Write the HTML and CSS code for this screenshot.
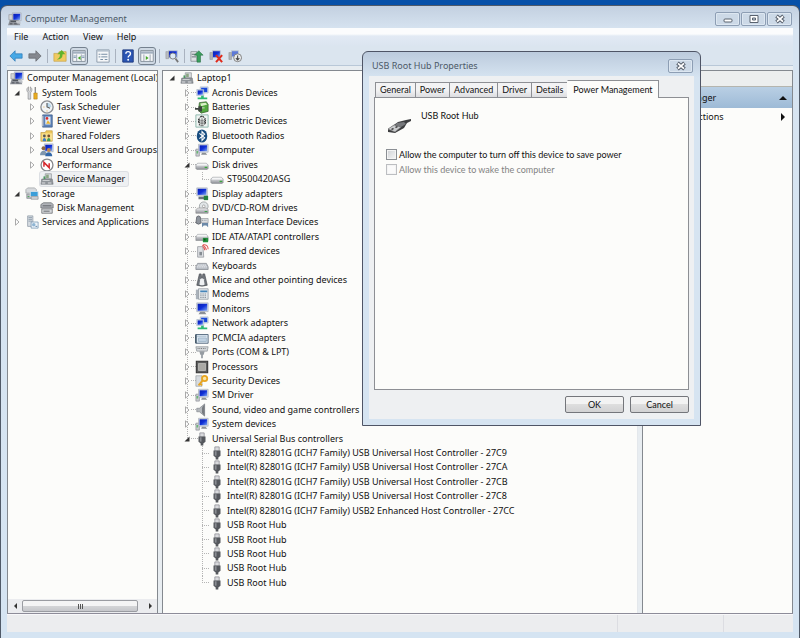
FILE: index.html
```html
<!DOCTYPE html>
<html lang="en">
<head>
    <meta charset="UTF-8">
    <meta name="viewport" content="width=device-width, initial-scale=1.0">
    <title>Computer Management</title>
    <link rel="stylesheet" href="styles.css">
</head>
<body>
    <svg class="sprite" aria-hidden="true">
        <defs>
            <linearGradient id="screen" x1="0" y1="0" x2="1" y2="1"><stop offset="0" stop-color="#0a1fae"/><stop offset=".5" stop-color="#1030d8"/><stop offset="1" stop-color="#7fa8f0"/></linearGradient>
            <linearGradient id="metal" x1="0" y1="0" x2="0" y2="1"><stop offset="0" stop-color="#f2f2f4"/><stop offset="1" stop-color="#8f9298"/></linearGradient>
        </defs>
        <symbol id="open" viewBox="0 0 8 8"><path d="M6.500 1.500v5h-5z" fill="#333"/></symbol>
        <symbol id="closed" viewBox="0 0 8 8"><path d="M2.500 .8v6.400L6 4z" fill="#fff" stroke="#a0a0a0" stroke-width=".9"/></symbol>
        <symbol id="pc" viewBox="0 0 16 16"><path d="M1 7h4v8H1z" fill="#c9ccd0" stroke="#83878d" stroke-width=".7"/><path d="M2 9h1v3H2z" fill="#2fae3a"/><path d="M4 1.500h11v9H4z" fill="#e2e6ec" stroke="#9aa3b0" stroke-width=".7"/><path d="M5.200 2.600h8.700v6.800H5.200z" fill="url(#screen)"/><path d="M8 11h4l2 2.500H7z" fill="#8b9096"/></symbol>
        <symbol id="mgmt" viewBox="0 0 16 16"><path d="M5 1h10v9H5z" fill="#e2e6ec" stroke="#9aa3b0" stroke-width=".7"/><path d="M6 2h8v7H6z" fill="url(#screen)"/><path d="M1 3h4v6H1z" fill="#d3d5d8" stroke="#888" stroke-width=".6"/><path d="M2 9h10l2 6H0z" fill="#8d9198"/><path d="M3 10h7v1H3zM2 13h3v1H2zM7 13h4v1H7z" fill="#3d4148"/><path d="M9 10h4l2 3h-5z" fill="#c2c6cb"/></symbol>
        <symbol id="tools" viewBox="0 0 16 16"><path d="M4 1v4l1 1 1-1V1c3 2 2 5 .5 6.500V15h-3V7.500C2 6 1 3 4 1z" fill="#d3d5d9" stroke="#777" stroke-width=".6"/><path d="M11 1h1.500v7H11z" fill="#888"/><path d="M10 8h4v7h-4z" fill="#e8ac20" stroke="#a57310" stroke-width=".5"/></symbol>
        <symbol id="clock" viewBox="0 0 16 16"><circle cx="8" cy="8" r="7" fill="#f2f5f7" stroke="#8a8d92" stroke-width="1.500"/><path d="M8 8V3a5 5 0 0 1 5 5z" fill="#b9d8ec"/><path d="M8 3.500V8l3.500 1.500" fill="none" stroke="#555" stroke-width="1.200"/><path d="M4 8h1M8 12v1" stroke="#e39a20"/></symbol>
        <symbol id="book" viewBox="0 0 16 16"><path d="M3 1h11v14H3z" fill="#5d82b8" stroke="#385986" stroke-width=".8"/><path d="M2 2h2v12H2z" fill="#b9bfc6"/><path d="M6 3h6v9H6z" fill="#dfe9f5"/><circle cx="8" cy="5" r="1.500" fill="#d92b2b"/><path d="M9 7l3 4H7z" fill="#e8b22c"/></symbol>
        <symbol id="shared" viewBox="0 0 16 16"><path d="M1 4h5l1-2h7v12H1z" fill="#efc95c" stroke="#b8923a" stroke-width=".7"/><path d="M2 5h12v8H2z" fill="#f8df8d"/><circle cx="5" cy="8" r="1.600" fill="#555"/><path d="M3 14c0-5 4-5 4 0z" fill="#3a7cc4"/><circle cx="10" cy="8" r="1.600" fill="#7a4f2a"/><path d="M8 14c0-5 4-5 4 0z" fill="#3e9a53"/></symbol>
        <symbol id="users" viewBox="0 0 16 16"><path d="M5 1h10v9H5z" fill="#e2e6ec" stroke="#9aa3b0" stroke-width=".7"/><path d="M6 2h8v7H6z" fill="url(#screen)"/><circle cx="4" cy="6" r="2.200" fill="#8c6540"/><path d="M0 14c0-7 8-7 8 0z" fill="#7f96ad"/><circle cx="10" cy="8" r="2.200" fill="#c08850"/><path d="M6 15c0-6 8-6 8 0z" fill="#3267a8"/></symbol>
        <symbol id="perf" viewBox="0 0 16 16"><circle cx="8" cy="8" r="6.800" fill="#fff" stroke="#85888c" stroke-width="1.500"/><path d="M4.500 10V5l6 6V6" fill="none" stroke="#d5262b" stroke-width="1.700"/></symbol>
        <symbol id="device" viewBox="0 0 16 16"><path d="M6 2h7v6H6z" fill="#dadde0" stroke="#81858a" stroke-width=".7"/><path d="M7 3h3v4H7z" fill="#8ba583"/><path d="M2 8h12l1 6H1z" fill="#90959a" stroke="#6d7177" stroke-width=".6"/><path d="M3 9h8v1H3zM2 12h4v1H2zM9 12h4v1H9z" fill="#dfe2e4"/><path d="M4 5h2v3H4z" fill="#4c9960"/></symbol>
        <symbol id="storage" viewBox="0 0 16 16"><path d="M1 3l2-2h8l2 2v4H1z" fill="#d7dadd" stroke="#8c9096" stroke-width=".7"/><path d="M2 8h10v5H2z" fill="#b9bdc2" stroke="#7d8187" stroke-width=".7"/><path d="M6 5h9v6H6z" fill="#3b9ed8" stroke="#e5e8eb"/><path d="M7 11h8v3H7z" fill="#d2d5d8" stroke="#777" stroke-width=".6"/><path d="M3 11h2" stroke="#35a445"/></symbol>
        <symbol id="disk" viewBox="0 0 16 16"><path d="M1 4l3-2h9l2 2v4H1z" fill="#b0b3b8" stroke="#61656a" stroke-width=".8"/><path d="M2 9h12v5H2z" fill="#d5d7da" stroke="#61656a" stroke-width=".8"/><path d="M3 5h10v1H3zM4 11h7v1H4z" fill="#45484c"/></symbol>
        <symbol id="services" viewBox="0 0 16 16"><path d="M3 1h6v12H3z" fill="#d6dce2" stroke="#8894a0" stroke-width=".8"/><path d="M4 3h4M4 5h4M4 7h4" stroke="#8a99a8"/><path d="M7 8h8v7H7z" fill="#edf3f8" stroke="#6d8fae" stroke-width=".8"/><circle cx="10" cy="11" r="2" fill="#8fb5d3"/><path d="M12 13h2" stroke="#527da0"/></symbol>
        <symbol id="net" viewBox="0 0 16 16"><path d="M6 1h9v7H6z" fill="#d9e3f3" stroke="#98a5b8" stroke-width=".6"/><path d="M7 2h7v5H7z" fill="#1a49d8"/><path d="M2 4h8v7H2z" fill="#dfe8f6" stroke="#94a2b6" stroke-width=".6"/><path d="M3 5h6v5H3z" fill="url(#screen)"/><path d="M7 11h3v2h4v2H3v-2h4z" fill="#2dba74"/></symbol>
        <symbol id="battery" viewBox="0 0 16 16"><path d="M5 3l8-1 2 3v8l-8 2-3-3z" fill="#52a93e" stroke="#395c32" stroke-width=".8"/><path d="M6 4l6-1 2 2-7 2z" fill="#d9efc8"/><path d="M0 9h4V7h4v6H4v-2H0z" fill="#3e4340"/><path d="M8 9h3" stroke="#ddd"/></symbol>
        <symbol id="finger" viewBox="0 0 16 16"><path d="M1 1h14v14H1z" fill="#eef3f1" stroke="#86b4a8"/><path d="M5 13V6c0-4 6-4 6 0v6M7 14V7c0-2 2-2 2 0v7M4 10V5m8 6V5M6 3q2-1 4 0" fill="none" stroke="#222" stroke-width="1" stroke-dasharray="2 .6"/></symbol>
        <symbol id="bt" viewBox="0 0 16 16"><ellipse cx="8" cy="8" rx="6" ry="7.500" fill="#184d80"/><path d="M5 5l6 5-3 3V3l3 3-6 5" fill="none" stroke="#fff" stroke-width="1.200"/></symbol>
        <symbol id="drive" viewBox="0 0 16 16"><path d="M1 8l2-2h10l2 2v4l-1 1H2l-1-1z" fill="url(#metal)" stroke="#8a8d91" stroke-width=".7"/><path d="M3 6.500h10l1.500 2h-13z" fill="#f4f5f6"/><path d="M11 10h3v1.500h-3z" fill="#3aa83c"/></symbol>
        <symbol id="display" viewBox="0 0 16 16"><path d="M2 1h12v9H2z" fill="#e2e6ec" stroke="#9aa3b0" stroke-width=".7"/><path d="M3 2h10v7H3z" fill="url(#screen)"/><path d="M4 11h9v3H4z" fill="#6b747d"/><path d="M10 10h5v5h-5z" fill="#23803e"/></symbol>
        <symbol id="dvd" viewBox="0 0 16 16"><circle cx="10" cy="6" r="5" fill="#e1e6e8" stroke="#8d9295" stroke-width=".8"/><circle cx="10" cy="6" r="1.500" fill="#fff" stroke="#777" stroke-width=".6"/><path d="M1 10l2-2h10l2 2v4H1z" fill="url(#metal)" stroke="#888" stroke-width=".7"/><path d="M11 12h3" stroke="#2b9d3b"/></symbol>
        <symbol id="hid" viewBox="0 0 16 16"><path d="M2 2q2-2 4 0l1 7q-3 3-6 0z" fill="#8e949c" stroke="#50555b" stroke-width=".8"/><path d="M7 4h8v5H7z" fill="#dcdfe2" stroke="#8a8e94" stroke-width=".7"/><path d="M8 9h7v5l-2-2h-3l-2 2z" fill="#6b89a8"/><path d="M8 6h6" stroke="#7e848c" stroke-dasharray="1 1"/></symbol>
        <symbol id="ide" viewBox="0 0 16 16"><path d="M1 8l2-3h10l2 3v4H1z" fill="url(#metal)" stroke="#8a8d91" stroke-width=".7"/><path d="M3 5.500h10l1 2H2z" fill="#f4f5f6"/><path d="M9 9h6v5H9z" fill="#21903c"/><path d="M10 10h2v2h-2z" fill="#114d22"/></symbol>
        <symbol id="ir" viewBox="0 0 16 16"><path d="M3 3h6l1 12H3z" fill="#dcdfe2" stroke="#8a8e94" stroke-width=".8"/><path d="M5 9h3v4H5z" fill="#868c92"/><path d="M8 2q4 0 5 5M9 4q2 0 2 3M9 1q6-1 6 5" fill="none" stroke="#e05656" stroke-width="1.200"/></symbol>
        <symbol id="kbd" viewBox="0 0 16 16"><path d="M3 5h10l2 4v3H1V9z" fill="#b9bec5" stroke="#7e838a" stroke-width=".8"/><path d="M3 7h10M2 9h12" stroke="#f3f5f7" stroke-dasharray="1.500 .5"/></symbol>
        <symbol id="mouse" viewBox="0 0 16 16"><path d="M5 1h2l1 6 1-6h2l3 13q-6 2-12 0z" fill="#70757b" stroke="#43474c" stroke-width=".7"/><path d="M6 7q2-2 4 0l1 6q-3 2-6 0z" fill="#eef0f2"/></symbol>
        <symbol id="modem" viewBox="0 0 16 16"><path d="M1 3h3v11H1z" fill="#aab2ba"/><path d="M4 2h11v12H4z" fill="#e4e8eb" stroke="#88919a" stroke-width=".8"/><path d="M6 4h8v2H6z" fill="#4585b8"/><path d="M6 8h7M6 10h7M6 12h7" stroke="#7b8893" stroke-dasharray="1.500 1"/></symbol>
        <symbol id="monitor" viewBox="0 0 16 16"><path d="M2 1h13v10H2z" fill="#e2e6ec" stroke="#9aa3b0" stroke-width=".7"/><path d="M3 2h11v8H3z" fill="url(#screen)"/><path d="M6 11h5l2 3H4z" fill="#8b9096"/></symbol>
        <symbol id="card" viewBox="0 0 16 16"><path d="M1 4h14v10H1z" fill="#dbe7f1" stroke="#4e6478"/><path d="M2 6h11M4 8h9v4H4z" fill="#c0d2e2" stroke="#91a9bd" stroke-width=".7"/><path d="M1 4v10" stroke="#34495a" stroke-width="1.500"/></symbol>
        <symbol id="port" viewBox="0 0 16 16"><path d="M1 2h14l-1 5H2z" fill="#d3d7da" stroke="#8a9095" stroke-width=".8"/><path d="M3 4h10" stroke="#666" stroke-dasharray="1 1"/><path d="M5 7h6l-1 4H9v4H7v-4H6z" fill="#969ca2"/></symbol>
        <symbol id="cpu" viewBox="0 0 16 16"><path d="M1.500 1.500h13v13h-13z" fill="#5d5e5e" stroke="#333" stroke-width="1.200"/><path d="M4 4h8v8H4z" fill="#aaa9a5" stroke="#d1d1cd" stroke-width=".7"/></symbol>
        <symbol id="key" viewBox="0 0 16 16"><path d="M1 2h7v12H1z" fill="#d7dbdf" stroke="#8e959b" stroke-width=".7"/><circle cx="11" cy="5" r="3" fill="#fbe6a6" stroke="#e8a520" stroke-width="2"/><path d="M9 7l-5 6m2-2l2 2" stroke="#e8a520" stroke-width="2"/></symbol>
        <symbol id="sound" viewBox="0 0 16 16"><path d="M2 6h3l6-5v14l-6-5H2z" fill="#b4b8bc" stroke="#7a7e83" stroke-width=".7"/><path d="M8 5l3-4v14l-3-4z" fill="#777b80"/></symbol>
        <symbol id="usb" viewBox="0 0 16 16"><path d="M5.500 1h5v5h-5z" fill="#d9dadd" stroke="#85878c" stroke-width=".8"/><path d="M4 5h8v6l-2.500 2v2.500h-3V13L4 11z" fill="#55585d"/><path d="M5.500 6h2v5h-2z" fill="#8a8d92"/></symbol>
        <symbol id="back" viewBox="0 0 16 16"><path d="M1 8l6-6v3.500h8v5H7V14z" fill="#46a8e6" stroke="#2c78b5" stroke-width=".8"/></symbol>
        <symbol id="forward" viewBox="0 0 16 16"><path d="M15 8L9 2v3.500H1v5h8V14z" fill="#85888f" stroke="#63666c" stroke-width=".8"/></symbol>
        <symbol id="up" viewBox="0 0 16 16"><path d="M1 5h5l1-2h8v11H1z" fill="#f0ca62" stroke="#c49b3b" stroke-width=".7"/><path d="M4 12q4-1 4-6H5l5-5 4 5h-3q0 6-7 6z" fill="#60b32c"/></symbol>
        <symbol id="console" viewBox="0 0 18 16"><path d="M1 1h16v14H1z" fill="#f4f6f8" stroke="#78838f"/><path d="M1 2h16v3H1z" fill="#a3b0bf"/><path d="M6 6v9M12 6v9" stroke="#8894a1"/><path d="M2 8h3M2 10h3M13 8h3M13 10h3" stroke="#6284a3"/><path d="M11 8v5L7.500 10.500z" fill="#43a725"/></symbol>
        <symbol id="action" viewBox="0 0 18 16"><path d="M1 1h16v14H1z" fill="#f4f6f8" stroke="#78838f"/><path d="M1 2h16v3H1z" fill="#a3b0bf"/><path d="M5 6v9M13 6v9" stroke="#8894a1"/><path d="M7.500 8v5l3.500-2.500z" fill="#43a725"/></symbol>
        <symbol id="props" viewBox="0 0 16 16"><path d="M1 1h14v14H1z" fill="#f5f7f9" stroke="#8796a5"/><path d="M1 1h14v2H1z" fill="#b4c1cd"/><path d="M3 6h2M3 9h2M6 6h7M6 9h7M5 12h3M10 12h3" stroke="#668099"/></symbol>
        <symbol id="help" viewBox="0 0 16 16"><path d="M2 1h12v14H2z" fill="#2b55b3" stroke="#1b377c"/><path d="M5.500 5.500q0-2.500 2.700-2.500 2.600 0 2.600 2.300 0 1.500-1.500 2.400-1.100.7-1.100 2" fill="none" stroke="#fff" stroke-width="1.600"/><circle cx="8.200" cy="12.200" r="1.100" fill="#fff"/></symbol>
        <symbol id="scan" viewBox="0 0 16 16"><path d="M4 2h10v8H4z" fill="url(#screen)" stroke="#c4cbd4"/><path d="M1 3h3v8H1z" fill="#b9bdc2" stroke="#888" stroke-width=".5"/><circle cx="9" cy="8" r="3.500" fill="#dceaf5" stroke="#777"/><path d="M12 11l3 4" stroke="#777" stroke-width="2"/></symbol>
        <symbol id="update" viewBox="0 0 16 16"><path d="M1 3h7v11H1z" fill="#dde1e4" stroke="#7d8489" stroke-width=".8"/><path d="M2 6h5M2 9h5" stroke="#59616a"/><path d="M8 15V7H5l5-5 5 5h-3v8z" fill="#3a9e5d" stroke="#26693e" stroke-width=".6"/></symbol>
        <symbol id="remove" viewBox="0 0 16 16"><path d="M4 2h9v8H4z" fill="url(#screen)" stroke="#c4cbd4"/><path d="M1 4h3v8H1z" fill="#aeb2b7" stroke="#888" stroke-width=".5"/><path d="M8 7l7 8M15 7l-7 8" stroke="#e02a1b" stroke-width="2.300"/></symbol>
        <symbol id="disable" viewBox="0 0 16 16"><path d="M4 2h8v7H4z" fill="#5d79d8" stroke="#c4cbd4"/><path d="M1 4h3v8H1z" fill="#aeb2b7" stroke="#888" stroke-width=".5"/><circle cx="11" cy="10" r="4.500" fill="#e9ebed" stroke="#777"/><path d="M11 7.500v5M9 10.500l2 2 2-2" fill="none" stroke="#444" stroke-width="1.200"/></symbol>
        <symbol id="close" viewBox="0 0 12 12"><path d="M2.500 3l7 6M9.500 3l-7 6" stroke="#59626e" stroke-width="3.800"/><path d="M3 3.400l6 5.200M9 3.400L3 8.600" stroke="#fff" stroke-width="1.800"/></symbol>
        <symbol id="max" viewBox="0 0 12 12"><path d="M2 2.500h8v7H2z" fill="#fff" stroke="#59626e"/><path d="M4.500 5h3v2h-3z" fill="#ccd6e2" stroke="#59626e"/></symbol>
        <symbol id="min" viewBox="0 0 12 12"><rect x="2" y="6" width="8" height="3" rx="1" fill="#fff" stroke="#59626e"/></symbol>
        <symbol id="plug" viewBox="0 0 26 16"><path d="M25 1l-5 1-8 2-10 7v3l7 1 9-5 3-5 4-2z" fill="#3d3e40"/><path d="M2 11l6-4 7 2-6 5z" fill="#c9cbcd" stroke="#777" stroke-width=".6"/><path d="M5 11l2-1 1 1-2 1zM9 9l2-1 1 1-2 1z" fill="#333"/><path d="M11 5l7-1 2 2-5 3-6-2z" fill="#77797c"/></symbol>
    </svg>

    <main class="window">
        <header class="titlebar">
            <svg class="icon"><use href="#mgmt"/></svg>
            <h1>Computer Management</h1>
            <div class="caption-buttons">
                <button aria-label="Minimize"><svg><use href="#min"/></svg></button>
                <button aria-label="Maximize"><svg><use href="#max"/></svg></button>
                <button aria-label="Close"><svg><use href="#close"/></svg></button>
            </div>
        </header>
        <nav class="menubar">
            <button>File</button>
            <button>Action</button>
            <button>View</button>
            <button>Help</button>
        </nav>
        <div class="toolbar">
            <button aria-label="Back"><svg class="icon"><use href="#back"/></svg></button>
            <button aria-label="Forward"><svg class="icon"><use href="#forward"/></svg></button>
            <span class="sep"></span>
            <button aria-label="Up"><svg class="icon"><use href="#up"/></svg></button>
            <button class="pressed" aria-label="Console tree"><svg class="icon"><use href="#console"/></svg></button>
            <span class="gap"></span>
            <button aria-label="Properties"><svg class="icon"><use href="#props"/></svg></button>
            <span class="sep"></span>
            <button aria-label="Help topics"><svg class="icon"><use href="#help"/></svg></button>
            <button class="pressed" aria-label="Action pane"><svg class="icon"><use href="#action"/></svg></button>
            <span class="sep"></span>
            <button aria-label="Scan"><svg class="icon"><use href="#scan"/></svg></button>
            <span class="sep"></span>
            <button aria-label="Update driver"><svg class="icon"><use href="#update"/></svg></button>
            <button aria-label="Uninstall"><svg class="icon"><use href="#remove"/></svg></button>
            <button aria-label="Disable"><svg class="icon"><use href="#disable"/></svg></button>
        </div>

        <div class="panes">
            <section class="pane console">
                <ul class="tree">
                    <li class="root"><svg class="icon"><use href="#mgmt"/></svg><span>Computer Management (Local)</span></li>
                    <li class="l0"><svg class="toggle"><use href="#open"/></svg><svg class="icon"><use href="#tools"/></svg><span>System Tools</span></li>
                    <li class="l1"><svg class="toggle"><use href="#closed"/></svg><svg class="icon"><use href="#clock"/></svg><span>Task Scheduler</span></li>
                    <li class="l1"><svg class="toggle"><use href="#closed"/></svg><svg class="icon"><use href="#book"/></svg><span>Event Viewer</span></li>
                    <li class="l1"><svg class="toggle"><use href="#closed"/></svg><svg class="icon"><use href="#shared"/></svg><span>Shared Folders</span></li>
                    <li class="l1"><svg class="toggle"><use href="#closed"/></svg><svg class="icon"><use href="#users"/></svg><span>Local Users and Groups</span></li>
                    <li class="l1"><svg class="toggle"><use href="#closed"/></svg><svg class="icon"><use href="#perf"/></svg><span>Performance</span></li>
                    <li class="l1"><svg class="toggle"></svg><div class="selected"><svg class="icon"><use href="#device"/></svg><span>Device Manager</span></div></li>
                    <li class="l0"><svg class="toggle"><use href="#open"/></svg><svg class="icon"><use href="#storage"/></svg><span>Storage</span></li>
                    <li class="l1"><svg class="toggle"></svg><svg class="icon"><use href="#disk"/></svg><span>Disk Management</span></li>
                    <li class="l0"><svg class="toggle"><use href="#closed"/></svg><svg class="icon"><use href="#services"/></svg><span>Services and Applications</span></li>
                </ul>
                <div class="scrollbar">
                    <button class="arrow left" aria-label="Scroll left"></button>
                    <div class="thumb"><i></i><i></i><i></i></div>
                    <button class="arrow right" aria-label="Scroll right"></button>
                </div>
            </section>

            <section class="pane devices">
                <ul class="tree">
                    <li class="l0"><svg class="toggle"><use href="#open"/></svg><svg class="icon"><use href="#device"/></svg><span>Laptop1</span></li>
                    <li class="l1"><svg class="toggle"><use href="#closed"/></svg><svg class="icon"><use href="#net"/></svg><span>Acronis Devices</span></li>
                    <li class="l1"><svg class="toggle"><use href="#closed"/></svg><svg class="icon"><use href="#battery"/></svg><span>Batteries</span></li>
                    <li class="l1"><svg class="toggle"><use href="#closed"/></svg><svg class="icon"><use href="#finger"/></svg><span>Biometric Devices</span></li>
                    <li class="l1"><svg class="toggle"><use href="#closed"/></svg><svg class="icon"><use href="#bt"/></svg><span>Bluetooth Radios</span></li>
                    <li class="l1"><svg class="toggle"><use href="#closed"/></svg><svg class="icon"><use href="#pc"/></svg><span>Computer</span></li>
                    <li class="l1"><svg class="toggle"><use href="#open"/></svg><svg class="icon"><use href="#drive"/></svg><span>Disk drives</span></li>
                    <li class="l2 inner last"><svg class="toggle"></svg><svg class="icon"><use href="#drive"/></svg><span>ST9500420ASG</span></li>
                    <li class="l1"><svg class="toggle"><use href="#closed"/></svg><svg class="icon"><use href="#display"/></svg><span>Display adapters</span></li>
                    <li class="l1"><svg class="toggle"><use href="#closed"/></svg><svg class="icon"><use href="#dvd"/></svg><span>DVD/CD-ROM drives</span></li>
                    <li class="l1"><svg class="toggle"><use href="#closed"/></svg><svg class="icon"><use href="#hid"/></svg><span>Human Interface Devices</span></li>
                    <li class="l1"><svg class="toggle"><use href="#closed"/></svg><svg class="icon"><use href="#ide"/></svg><span>IDE ATA/ATAPI controllers</span></li>
                    <li class="l1"><svg class="toggle"><use href="#closed"/></svg><svg class="icon"><use href="#ir"/></svg><span>Infrared devices</span></li>
                    <li class="l1"><svg class="toggle"><use href="#closed"/></svg><svg class="icon"><use href="#kbd"/></svg><span>Keyboards</span></li>
                    <li class="l1"><svg class="toggle"><use href="#closed"/></svg><svg class="icon"><use href="#mouse"/></svg><span>Mice and other pointing devices</span></li>
                    <li class="l1"><svg class="toggle"><use href="#closed"/></svg><svg class="icon"><use href="#modem"/></svg><span>Modems</span></li>
                    <li class="l1"><svg class="toggle"><use href="#closed"/></svg><svg class="icon"><use href="#monitor"/></svg><span>Monitors</span></li>
                    <li class="l1"><svg class="toggle"><use href="#closed"/></svg><svg class="icon"><use href="#net"/></svg><span>Network adapters</span></li>
                    <li class="l1"><svg class="toggle"><use href="#closed"/></svg><svg class="icon"><use href="#card"/></svg><span>PCMCIA adapters</span></li>
                    <li class="l1"><svg class="toggle"><use href="#closed"/></svg><svg class="icon"><use href="#port"/></svg><span>Ports (COM &amp; LPT)</span></li>
                    <li class="l1"><svg class="toggle"><use href="#closed"/></svg><svg class="icon"><use href="#cpu"/></svg><span>Processors</span></li>
                    <li class="l1"><svg class="toggle"><use href="#closed"/></svg><svg class="icon"><use href="#key"/></svg><span>Security Devices</span></li>
                    <li class="l1"><svg class="toggle"><use href="#closed"/></svg><svg class="icon"><use href="#pc"/></svg><span>SM Driver</span></li>
                    <li class="l1"><svg class="toggle"><use href="#closed"/></svg><svg class="icon"><use href="#sound"/></svg><span>Sound, video and game controllers</span></li>
                    <li class="l1"><svg class="toggle"><use href="#closed"/></svg><svg class="icon"><use href="#pc"/></svg><span>System devices</span></li>
                    <li class="l1 last"><svg class="toggle"><use href="#open"/></svg><svg class="icon"><use href="#usb"/></svg><span>Universal Serial Bus controllers</span></li>
                    <li class="l2"><svg class="toggle"></svg><svg class="icon"><use href="#usb"/></svg><span>Intel(R) 82801G (ICH7 Family) USB Universal Host Controller - 27C9</span></li>
                    <li class="l2"><svg class="toggle"></svg><svg class="icon"><use href="#usb"/></svg><span>Intel(R) 82801G (ICH7 Family) USB Universal Host Controller - 27CA</span></li>
                    <li class="l2"><svg class="toggle"></svg><svg class="icon"><use href="#usb"/></svg><span>Intel(R) 82801G (ICH7 Family) USB Universal Host Controller - 27CB</span></li>
                    <li class="l2"><svg class="toggle"></svg><svg class="icon"><use href="#usb"/></svg><span>Intel(R) 82801G (ICH7 Family) USB Universal Host Controller - 27C8</span></li>
                    <li class="l2"><svg class="toggle"></svg><svg class="icon"><use href="#usb"/></svg><span>Intel(R) 82801G (ICH7 Family) USB2 Enhanced Host Controller - 27CC</span></li>
                    <li class="l2"><svg class="toggle"></svg><svg class="icon"><use href="#usb"/></svg><span>USB Root Hub</span></li>
                    <li class="l2"><svg class="toggle"></svg><svg class="icon"><use href="#usb"/></svg><span>USB Root Hub</span></li>
                    <li class="l2"><svg class="toggle"></svg><svg class="icon"><use href="#usb"/></svg><span>USB Root Hub</span></li>
                    <li class="l2"><svg class="toggle"></svg><svg class="icon"><use href="#usb"/></svg><span>USB Root Hub</span></li>
                    <li class="l2 last"><svg class="toggle"></svg><svg class="icon"><use href="#usb"/></svg><span>USB Root Hub</span></li>
                </ul>
            </section>

            <section class="pane actions">
                <div class="actions-title"></div>
                <div class="actions-group">Device Manager<span class="tri-up"></span></div>
                <div class="actions-item">More Actions<span class="tri-right"></span></div>
            </section>
        </div>
        <footer class="statusbar"><span></span><span></span></footer>
    </main>

    <section class="dialog" role="dialog" aria-labelledby="dialog-title">
        <header class="dialog-title">
            <h2 id="dialog-title">USB Root Hub Properties</h2>
            <button aria-label="Close"><svg><use href="#close"/></svg></button>
        </header>
        <div class="dialog-body">
            <div class="tabs">
                <button>General</button>
                <button>Power</button>
                <button>Advanced</button>
                <button>Driver</button>
                <button>Details</button>
                <button class="active">Power Management</button>
            </div>
            <div class="sheet">
                <div class="device-name">
                    <svg><use href="#plug"/></svg>
                    <span>USB Root Hub</span>
                </div>
                <label><input type="checkbox"> Allow the computer to turn off this device to save power</label>
                <label class="disabled"><input type="checkbox" disabled> Allow this device to wake the computer</label>
            </div>
            <div class="dialog-buttons">
                <button>OK</button>
                <button>Cancel</button>
            </div>
        </div>
    </section>
</body>
</html>
```
FILE: styles.css
```css
* {
    box-sizing: border-box;
}

body {
    margin: 0;
    padding-top: 5px;
    height: 100vh;
    overflow: hidden;
    background: #0650a8;
    font-family: "Noto Sans", "Open Sans", sans-serif;
    font-size: 9px;
    line-height: 14px;
    color: #111;
}

button {
    font: inherit;
    color: inherit;
    padding: 0;
    border: none;
    background: none;
}

h1, h2 {
    margin: 0;
    font-size: 9px;
    font-weight: normal;
    color: #4c5967;
}

.sprite {
    position: absolute;
    width: 0;
    height: 0;
}

.icon {
    width: 14px;
    height: 14px;
    flex: none;
}

.window {
    height: 100%;
    display: flex;
    flex-direction: column;
    padding: 0 6px 6px;
    border: 1px solid #505a68;
    border-bottom: none;
    border-radius: 7px 7px 0 0;
    background: linear-gradient(#c3d0e0, #d7e4f1 24px, #d5e4f2);
}

.titlebar {
    height: 22px;
    display: flex;
    align-items: center;
    gap: 3px;
    padding: 4px 1px 0 1px;
}

.titlebar h1 {
    flex: 1;
}

.caption-buttons {
    display: flex;
    gap: 1px;
}

.caption-buttons button, .dialog-title button {
    width: 25px;
    height: 14px;
    display: flex;
    justify-content: center;
    align-items: center;
    border: 1px solid #8d9eb4;
    border-radius: 2px;
    background: #ccd9e7;
    box-shadow: inset 0 0 0 1px #dde7f1;
}

.caption-buttons svg, .dialog-title svg {
    width: 12px;
    height: 12px;
}

.menubar {
    height: 18px;
    display: flex;
    gap: 14px;
    padding: 0 7px;
    background: linear-gradient(#fbfcfd 6px, #e2eaf4 8px, #dbe5f0);
}

.menubar button {
    line-height: 18px;
}

.toolbar {
    height: 20px;
    display: flex;
    align-items: center;
    gap: 5px;
    padding: 0 2px;
    background: #dbe5ef;
    border-bottom: 1px solid #b9c8d8;
}

.toolbar button {
    width: 14px;
    height: 16px;
    display: flex;
    align-items: center;
    justify-content: center;
}

.toolbar .pressed {
    width: 18px;
    height: 18px;
    margin: 0 -2px;
    border: 1px solid #75818f;
    border-radius: 3px;
    background: #cfd9e4;
}

.toolbar .sep {
    width: 1px;
    height: 14px;
    background: #a9b2bf;
}

.panes {
    flex: 1;
    min-height: 0;
    display: grid;
    grid-template-columns: 151px 1fr 151px;
    gap: 4px;
    padding-top: 4px;
    background: #e8edf1;
    border-bottom: 1px solid #8d8c99;
}

.pane {
    min-width: 0;
    min-height: 0;
    display: flex;
    flex-direction: column;
    overflow: hidden;
    background: #fcfcfa;
    border: 1px solid #84898f;
    border-bottom: none;
}

.devices {
    border-right-color: #e4e8ec;
}

.tree {
    flex: 1;
    margin: 0;
    padding: 0;
    list-style: none;
    display: grid;
    grid-template-rows: repeat(36, 1fr);
}

.tree li {
    display: flex;
    align-items: center;
    min-height: 0;
    white-space: nowrap;
}

.tree .icon {
    margin-right: 3px;
}

.tree .toggle {
    width: 8px;
    height: 8px;
    margin-right: 4px;
    flex: none;
}

.console .tree {
    margin-bottom: 9px;
}

.devices .tree {
    margin-bottom: 23px;
}

.tree .root {
    padding-left: 2px;
}

.tree .l0 {
    padding-left: 5px;
}

.tree .l1 {
    padding-left: 20px;
}

.tree .l2 {
    padding-left: 35px;
}

.selected {
    display: flex;
    align-items: center;
    height: 14px;
    padding-right: 3px;
    border-radius: 2px;
    background: #eef0f2;
    box-shadow: 0 0 0 1px #dcdfe3;
}

/* dotted guide lines between the devices */
.devices .l1, .devices .l2 {
    --dots: repeating-linear-gradient(#b4b4b4 0 1px, transparent 1px 2px);
    --dash: repeating-linear-gradient(90deg, #b4b4b4 0 1px, transparent 1px 2px);
    background-repeat: no-repeat;
}

.devices .l1 {
    background-image: var(--dots), var(--dash);
    background-position: 24px 0, 28px 50%;
    background-size: 1px 100%, 5px 1px;
}

.devices .l2 {
    background-image: var(--dots), var(--dash);
    background-position: 39px 0, 39px 50%;
    background-size: 1px 100%, 8px 1px;
}

.devices .l1.last, .devices .l2.last {
    background-size: 1px 50%, 8px 1px;
}

.devices .l2.inner {
    background-image: var(--dots), var(--dash), var(--dots);
    background-position: 39px 0, 39px 50%, 24px 0;
    background-size: 1px 50%, 8px 1px, 1px 100%;
}

.scrollbar {
    height: 14px;
    display: flex;
    padding: 1px 0;
    background: #ebecef;
}

.scrollbar .arrow {
    width: 14px;
    display: flex;
    align-items: center;
    justify-content: center;
}

.arrow::before {
    content: "";
    border: 3px solid transparent;
}

.arrow.left::before {
    border-left-width: 0;
    border-right-color: #333;
}

.arrow.right::before {
    border-right-width: 0;
    border-left-color: #333;
}

.thumb {
    width: 116px;
    display: flex;
    align-items: center;
    justify-content: center;
    gap: 1px;
    border: 1px solid #9a9ca2;
    border-radius: 2px;
    background: linear-gradient(#f4f4f5 45%, #d4d5d8 50%, #c6c7cb);
}

.thumb i {
    width: 1px;
    height: 5px;
    background: #555;
}

.scrollbar .right {
    margin-left: auto;
}

.actions-title {
    height: 16px;
    background: #eceeee;
    border-bottom: 1px solid #b5b5ae;
}

.actions-group, .actions-item {
    height: 21px;
    display: flex;
    align-items: center;
    justify-content: space-between;
    padding: 0 5px;
}

.actions-group {
    background: linear-gradient(#b9cfe4, #9dbad6);
}

.actions-item {
    height: 18px;
    padding-left: 25px;
}

.tri-up {
    border: 4px solid transparent;
    border-top: none;
    border-bottom-color: #111;
}

.tri-right {
    margin-right: 2px;
    border: 4px solid transparent;
    border-right: none;
    border-left-color: #111;
}

.statusbar {
    height: 18px;
    display: flex;
    justify-content: flex-end;
    background: #ecedef;
    border-top: 1px solid #f8f8fa;
}

.statusbar span {
    width: 106px;
    border-left: 1px solid #dcdde2;
}

.statusbar span:last-child {
    width: 70px;
}

.dialog {
    position: absolute;
    left: 362px;
    top: 51px;
    width: 339px;
    height: 375px;
    display: flex;
    flex-direction: column;
    padding: 0 6px 6px;
    border: 1px solid #4f5566;
    border-radius: 6px 6px 0 0;
    background: linear-gradient(#bccbdd, #d6e4f1 26px);
}

.dialog-title {
    height: 24px;
    display: flex;
    align-items: center;
    justify-content: space-between;
    padding: 4px 1px 0 3px;
}

.dialog-body {
    flex: 1;
    display: flex;
    flex-direction: column;
    padding: 4px 5px 6px;
    background: #eef0f2;
    font-family: Lato, "Liberation Sans", Arial, sans-serif;
}

.tabs {
    display: flex;
    align-items: flex-end;
    height: 17px;
    padding-left: 1px;
}

.tabs button {
    height: 15px;
    padding: 0 4px;
    border: 1px solid #8d8f94;
    border-bottom: none;
    border-right-width: 0;
    background: linear-gradient(#f3f3f4 50%, #dcdde0);
}

.tabs .active {
    height: 18px;
    margin-bottom: -1px;
    padding: 0 5px;
    border-right-width: 1px;
    border-left-color: #fcfcfa;
    background: #fcfcfa;
    z-index: 1;
}

.sheet {
    flex: 1;
    padding: 11px;
    border: 1px solid #8d8f94;
    background: #fcfcfa;
}

.device-name {
    display: flex;
    gap: 9px;
    height: 38px;
}

.device-name svg {
    width: 26px;
    height: 16px;
    margin-top: 9px;
}

.sheet label {
    display: flex;
    align-items: center;
    gap: 2px;
    height: 15px;
}

.sheet input {
    appearance: none;
    width: 11px;
    height: 11px;
    margin: 0;
    border: 1px solid #8b8f94;
    background: linear-gradient(135deg, #cfd2d6, #f6f6f6);
    box-shadow: inset 0 0 0 1px #f4f4f4;
}

.sheet .disabled {
    color: #838383;
}

.sheet .disabled input {
    border-color: #bcbec1;
    background: #fafafa;
}

.dialog-buttons {
    display: flex;
    justify-content: flex-end;
    gap: 6px;
    padding-top: 6px;
}

.dialog-buttons button {
    width: 59px;
    height: 17px;
    border: 1px solid #74767b;
    border-radius: 2px;
    background: linear-gradient(#f3f3f3 45%, #dedede 50%, #d2d2d3);
}
```
